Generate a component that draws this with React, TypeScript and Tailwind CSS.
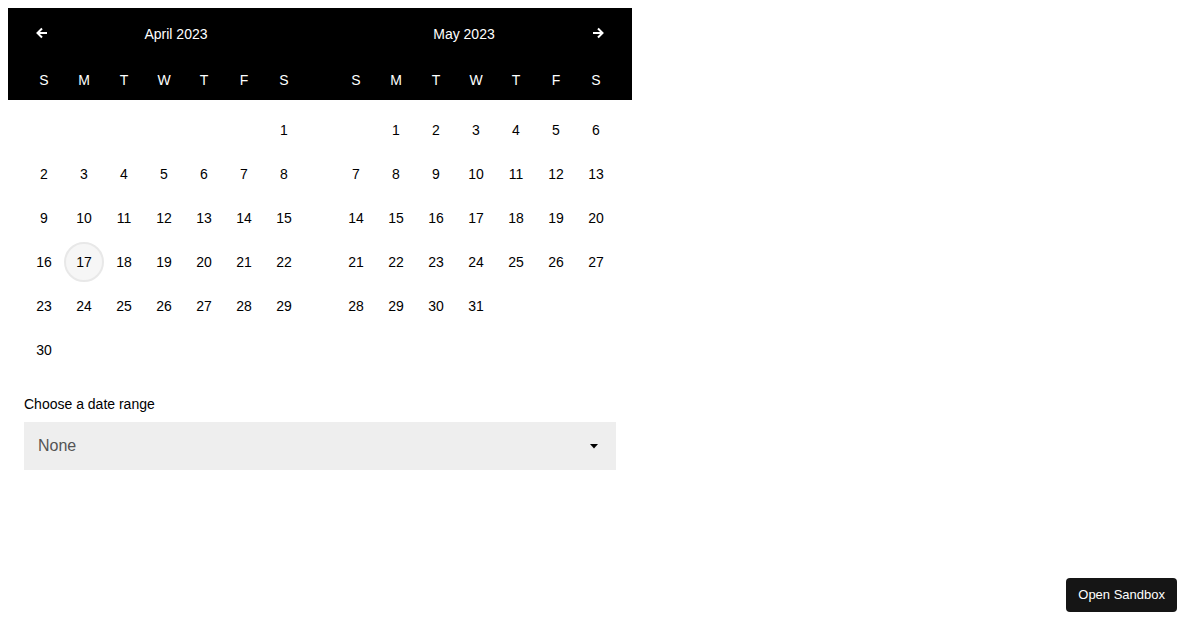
import React from "react";

type Cell = number | null;

const WEEKDAYS = ["S", "M", "T", "W", "T", "F", "S"];

function buildWeeks(startDay: number, days: number): Cell[][] {
  const cells: Cell[] = [];
  for (let i = 0; i < startDay; i++) cells.push(null);
  for (let d = 1; d <= days; d++) cells.push(d);
  const weeks: Cell[][] = [];
  for (let i = 0; i < cells.length; i += 7) weeks.push(cells.slice(i, i + 7));
  return weeks;
}

const MONTHS = [
  { title: "April 2023", weeks: buildWeeks(6, 30), highlight: 17, side: "left" as const },
  { title: "May 2023", weeks: buildWeeks(1, 31), highlight: null, side: "right" as const },
];

function ArrowLeft() {
  return (
    <svg width="12" height="12" viewBox="0 0 12 12" fill="none">
      <path d="M11 6H2M6 1.5L1.5 6L6 10.5" stroke="white" strokeWidth="2" />
    </svg>
  );
}

function ArrowRight() {
  return (
    <svg width="12" height="12" viewBox="0 0 12 12" fill="none">
      <path d="M1 6H10M6 1.5L10.5 6L6 10.5" stroke="white" strokeWidth="2" />
    </svg>
  );
}

export default function App() {
  return (
    <div
      className="min-h-screen bg-white p-2 text-black"
      style={{ fontFamily: '"Liberation Sans", Arial, sans-serif' }}
    >
      <div className="w-[624px]">
        {/* Header */}
        <div className="flex bg-black text-white">
          {MONTHS.map((m) => (
            <div key={m.title} className="w-[312px] px-4">
              <div className="flex h-[50px] items-center">
                {m.side === "left" && (
                  <div className="flex h-6 w-6 items-center justify-end">
                    <ArrowLeft />
                  </div>
                )}
                <div className="flex flex-1 justify-center pt-[2px] text-[14px]">
                  {m.title}
                </div>
                {m.side === "right" && (
                  <div className="flex h-6 w-6 items-center justify-start">
                    <ArrowRight />
                  </div>
                )}
              </div>
              <div className="flex h-[42px] items-center pt-[2px]">
                {WEEKDAYS.map((w, i) => (
                  <div key={i} className="flex w-10 justify-center text-[14px]">
                    {w}
                  </div>
                ))}
              </div>
            </div>
          ))}
        </div>

        {/* Days */}
        <div className="flex pt-2">
          {MONTHS.map((m) => (
            <div key={m.title} className="w-[312px] px-4">
              {m.weeks.map((week, wi) => (
                <div key={wi} className="flex h-11">
                  {week.map((d, di) => (
                    <div key={di} className="flex w-10 items-center justify-center">
                      {d !== null &&
                        (d === m.highlight ? (
                          <div className="flex h-10 w-10 items-center justify-center rounded-full border-2 border-[#e8e8e8] bg-[#f6f6f6] text-[14px]">
                            {d}
                          </div>
                        ) : (
                          <span className="text-[14px]">{d}</span>
                        ))}
                    </div>
                  ))}
                </div>
              ))}
            </div>
          ))}
        </div>

        {/* Range select */}
        <div className="mt-[22px] px-4">
          <div className="mb-2 text-[14px] leading-5">Choose a date range</div>
          <div className="flex h-12 items-center justify-between bg-[#eeeeee] pl-[14px] pr-[18px]">
            <span className="text-[16px] text-[#545454]">None</span>
            <svg width="8" height="5" viewBox="0 0 8 5">
              <path d="M0 0H8L4 4.5Z" fill="black" />
            </svg>
          </div>
        </div>
      </div>

      <button className="fixed bottom-[18px] right-[23px] h-[34px] rounded-[4px] bg-[#151515] px-3 text-[13px] text-white">
        Open Sandbox
      </button>
    </div>
  );
}
